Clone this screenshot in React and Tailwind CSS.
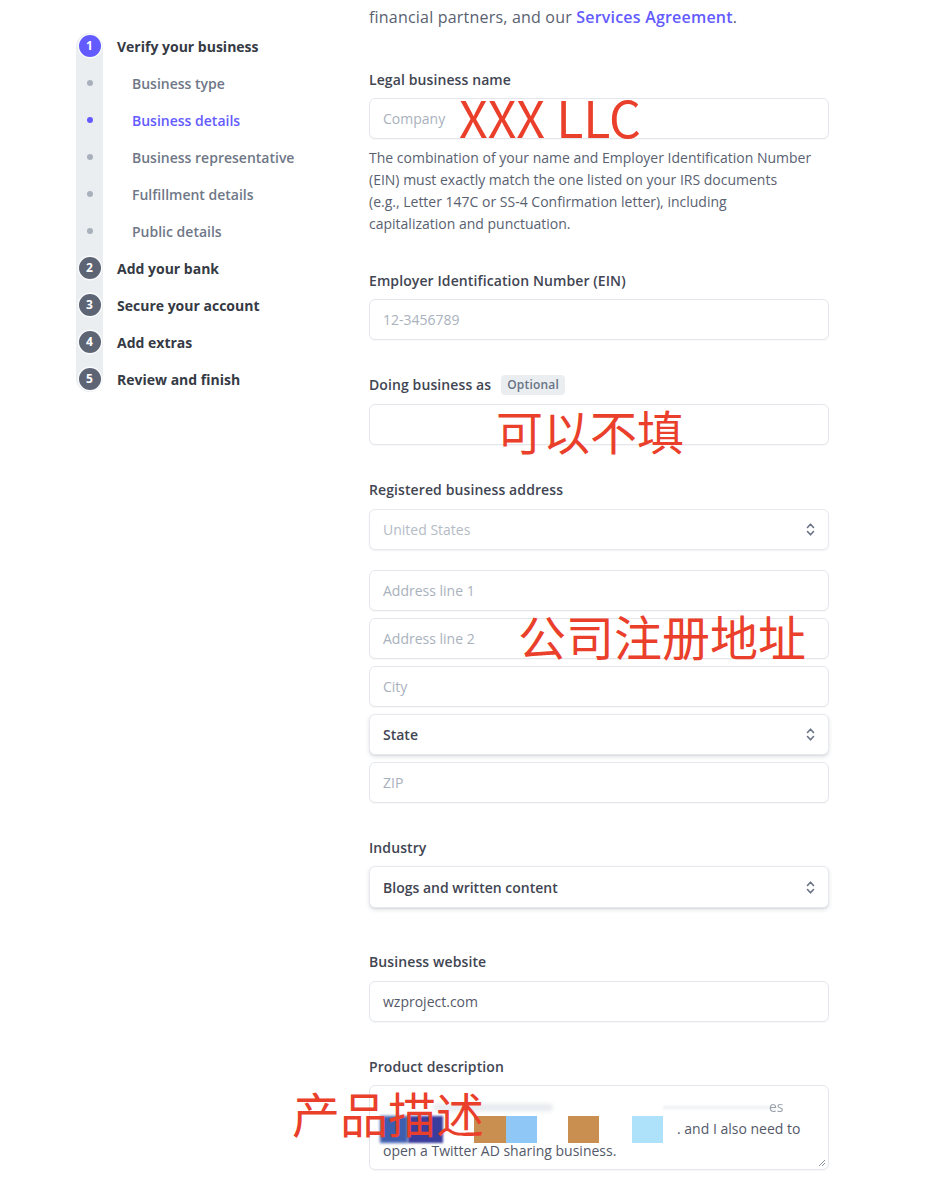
import React from "react";

function Chevrons() {
  return (
    <svg width="9" height="15" viewBox="0 0 9 15" fill="none" stroke="#687385" strokeWidth="1.6" strokeLinecap="round" strokeLinejoin="round">
      <path d="M1.5 5.5L4.5 2.2L7.5 5.5" />
      <path d="M1.5 9.5L4.5 12.8L7.5 9.5" />
    </svg>
  );
}

function Input({ placeholder, value, className = "" }) {
  return (
    <div className={"h-[41px] rounded-[6px] border border-[#e3e7ec] bg-white shadow-[0_1px_1px_rgba(0,0,0,0.03)] flex items-center px-[13px] text-[14px] " + className}>
      {value ? (
        <span className="text-[#545969]">{value}</span>
      ) : (
        <span className="text-[#a9b1bd]">{placeholder}</span>
      )}
    </div>
  );
}

function Select({ text, muted, className = "" }) {
  return (
    <div className={"rounded-[6px] border border-[#e6e9ee] bg-white flex items-center justify-between pl-[13px] pr-[13px] text-[14px] " + (muted ? "shadow-[0_1px_2px_rgba(0,0,0,0.06)] " : "shadow-[0_1px_1px_rgba(0,0,0,0.06),0_2px_4px_rgba(60,66,87,0.14)] ") + className}>
      <span className={muted ? "text-[#b4bbc6]" : "font-semibold text-[#414552]"}>{text}</span>
      <Chevrons />
    </div>
  );
}

function Label({ children, className = "" }) {
  return (
    <div className={"text-[14px] leading-[20px] font-semibold text-[#414552] tracking-[0.1px] " + className}>{children}</div>
  );
}

function StepCircle({ n, active }) {
  return (
    <div className={"w-[22px] h-[22px] rounded-full flex items-center justify-center text-white text-[12px] font-bold shadow-[0_0_0_1.5px_rgba(255,255,255,0.7)] " + (active ? "bg-[#635bff]" : "bg-[#5d6575]")}>
      {n}
    </div>
  );
}

function Dot({ active }) {
  return (
    <div className="w-[22px] h-[22px] flex items-center justify-center">
      <div className={"w-[6px] h-[6px] rounded-full " + (active ? "bg-[#635bff]" : "bg-[#a8b0bc]")} />
    </div>
  );
}

export default function App() {
  const steps = [
    { type: "main", n: 1, text: "Verify your business", active: true },
    { type: "sub", text: "Business type" },
    { type: "sub", text: "Business details", active: true },
    { type: "sub", text: "Business representative" },
    { type: "sub", text: "Fulfillment details" },
    { type: "sub", text: "Public details" },
    { type: "main", n: 2, text: "Add your bank" },
    { type: "main", n: 3, text: "Secure your account" },
    { type: "main", n: 4, text: "Add extras" },
    { type: "main", n: 5, text: "Review and finish" },
  ];

  return (
    <div className="relative w-[937px] h-[1200px] bg-white overflow-hidden font-['Open_Sans',sans-serif]">
      <div className="flex">
        {/* Sidebar */}
        <aside className="w-[369px] shrink-0 pl-[76px] pt-[33px]">
          <div className="flex">
            <div className="w-[27px] rounded-full bg-[#ebeef1] py-[2px] flex flex-col items-center gap-[15px]">
              {steps.map((s, i) =>
                s.type === "main" ? <StepCircle key={i} n={s.n} active={s.active} /> : <Dot key={i} active={s.active} />
              )}
            </div>
            <div className="ml-[14px] py-[2px] flex flex-col gap-[15px]">
              {steps.map((s, i) => (
                <div
                  key={i}
                  className={
                    "h-[22px] flex items-center text-[14px] whitespace-nowrap " +
                    (s.type === "main"
                      ? "font-bold text-[#353a44]"
                      : s.active
                      ? "pl-[15px] font-semibold text-[#635bff]"
                      : "pl-[15px] font-semibold text-[#6f7787]")
                  }
                >
                  {s.text}
                </div>
              ))}
            </div>
          </div>
        </aside>

        {/* Main form */}
        <main className="w-[460px] flex flex-col">
          <p className="mt-[5px] text-[16px] leading-[24px] text-[#596171] whitespace-nowrap tracking-[0.2px]">
            financial partners, and our <span className="font-semibold text-[#635bff]">Services Agreement</span>.
          </p>

          <Label className="mt-[41px]">Legal business name</Label>
          <Input className="mt-[8px]" placeholder="Company" />
          <p className="mt-[8px] text-[14px] leading-[22px] text-[#596171]">
            The combination of your name and Employer Identification Number<br />
            (EIN) must exactly match the one listed on your IRS documents<br />
            (e.g., Letter 147C or SS-4 Confirmation letter), including<br />
            capitalization and punctuation.
          </p>

          <Label className="mt-[36px]">Employer Identification Number (EIN)</Label>
          <Input className="mt-[8px]" placeholder="12-3456789" />

          <div className="mt-[35px] h-[20px] flex items-center gap-[10px]">
            <Label>Doing business as</Label>
            <span className="h-[20px] px-[6px] rounded-[4px] bg-[#ebeef1] text-[12px] font-semibold text-[#687385] flex items-center tracking-[0.2px]">Optional</span>
          </div>
          <Input className="mt-[9px]" placeholder="" />

          <Label className="mt-[35px]">Registered business address</Label>
          <Select className="mt-[9px] h-[41px]" text="United States" muted />
          <Input className="mt-[20px]" placeholder="Address line 1" />
          <Input className="mt-[7px]" placeholder="Address line 2" />
          <Input className="mt-[7px]" placeholder="City" />
          <Select className="mt-[7px] h-[41px]" text="State" />
          <Input className="mt-[7px]" placeholder="ZIP" />

          <Label className="mt-[35px]">Industry</Label>
          <Select className="mt-[8px] h-[42px]" text="Blogs and written content" />

          <Label className="mt-[44px]">Business website</Label>
          <Input className="mt-[9px]" value="wzproject.com" />

          <Label className="mt-[35px]">Product description</Label>
          <div className="relative mt-[8px] h-[85px] rounded-[6px] border border-[#e3e7ec] bg-white shadow-[0_1px_1px_rgba(0,0,0,0.03)] px-[13px] pt-[10px] text-[14px] leading-[22px] text-[#545969]">
            <div className="h-[22px] flex items-center">
              <span className="ml-[50px] w-[120px] h-[7px] rounded bg-[#e6e9ee] blur-[2px]" />
              <span className="ml-[110px] w-[110px] h-[3px] bg-[#eef0f3] blur-[1px]" />
              <span className="ml-[-4px] text-[#9aa1ad] blur-[0.6px]">es</span>
            </div>
            <div className="h-[22px] flex items-center ml-[-3px]">
              <span className="w-[28px] h-[27px] bg-[#3d5dae] blur-[1.5px]" />
              <span className="w-[35px] h-[27px] bg-[#3a3d9c] blur-[1px]" />
              <span className="ml-[31px] w-[32px] h-[27px] bg-[#c98f50] blur-[0.5px]" />
              <span className="w-[31px] h-[27px] bg-[#8fc8f6] blur-[0.5px]" />
              <span className="ml-[31px] w-[31px] h-[27px] bg-[#c98f50] blur-[0.5px]" />
              <span className="ml-[33px] w-[31px] h-[27px] bg-[#aee2fa] blur-[0.5px]" />
              <span className="ml-[14px] whitespace-nowrap">. and I also need to</span>
            </div>
            <div className="h-[22px] whitespace-nowrap">open a Twitter AD sharing business.</div>
            <svg className="absolute right-[2px] bottom-[2px]" width="9" height="9" viewBox="0 0 9 9" stroke="#8a919e" strokeWidth="1">
              <path d="M8 2L2 8" />
              <path d="M8 5L5 8" />
            </svg>
          </div>
        </main>
      </div>

      {/* Red annotations overlaid on the screenshot */}
      <div className="absolute left-[459px] top-[94px] text-[50px] leading-[44px] text-[#ea3f2b] font-['Noto_Sans_CJK_SC',sans-serif] whitespace-nowrap">XXX LLC</div>
      <div className="absolute left-[496px] top-[406px] text-[47px] leading-none text-[#ea3f2b] font-['Noto_Sans_CJK_SC',sans-serif] whitespace-nowrap">可以不填</div>
      <div className="absolute left-[518px] top-[611px] text-[48px] leading-none text-[#ea3f2b] font-['Noto_Sans_CJK_SC',sans-serif] whitespace-nowrap">公司注册地址</div>
      <div className="absolute left-[292px] top-[1088px] text-[48px] leading-none text-[#ea3f2b] font-['Noto_Sans_CJK_SC',sans-serif] whitespace-nowrap">产品描述</div>
    </div>
  );
}
